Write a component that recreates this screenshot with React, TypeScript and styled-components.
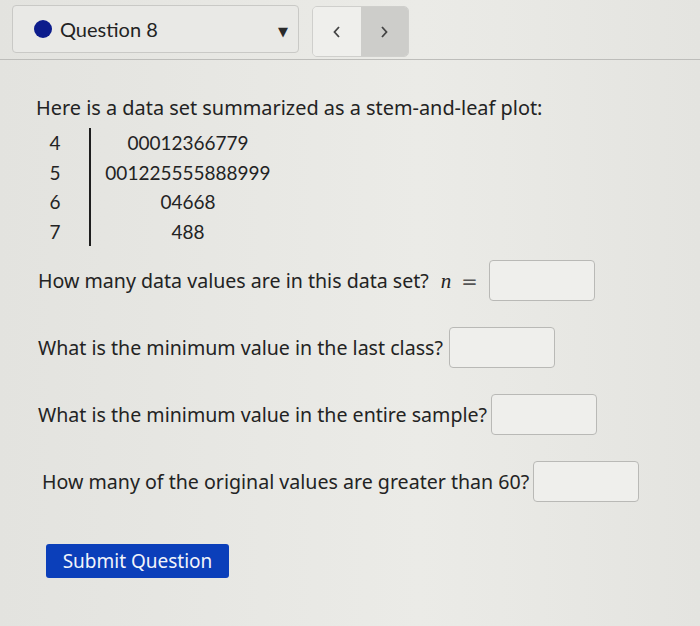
import React from 'react';
import styled, {createGlobalStyle} from 'styled-components';

const Global = createGlobalStyle`
  html, body {
    margin: 0;
    padding: 0;
    background: #e6e6e2;
  }
  body {
    font-family: 'Noto Sans', 'Liberation Sans', sans-serif;
    color: #232323;
  }
`;

const Page = styled.div`
  width: 700px;
  height: 626px;
  overflow: hidden;
  background: linear-gradient(90deg, #e3e3df, #ebebe7 60%, #e4e4e0);
`;

const Header = styled.div`
  display: flex;
  align-items: flex-start;
  gap: 13px;
  height: 54px;
  padding: 5px 0 0 12px;
  border-bottom: 1px solid #bdbdba;
`;

const Select = styled.div`
  box-sizing: border-box;
  width: 287px;
  height: 48px;
  display: flex;
  align-items: center;
  padding: 0 10px 0 21px;
  border: 1px solid #c9c9c6;
  border-radius: 4px;
  background: #e9e9e6;
  font-family: Lato, 'Noto Sans', sans-serif;
  font-size: 20px;
`;

const Dot = styled.span`
  width: 18px;
  height: 18px;
  border-radius: 50%;
  background: #0c1c8c;
  margin-right: 8px;
`;

const SelectLabel = styled.span`
  flex: 1;
`;

const Caret = styled.span`
  font-family: 'DejaVu Sans', sans-serif;
  font-size: 13px;
  color: #2a2a2a;
  margin-top: 5px;
`;

const Nav = styled.div`
  display: flex;
  width: 95px;
  height: 49px;
  margin-top: 1px;
  border: 1px solid #cfcfcc;
  border-radius: 5px;
  overflow: hidden;
`;

const NavButton = styled.div<{$active?: boolean}>`
  flex: 1;
  display: flex;
  align-items: center;
  justify-content: center;
  background: ${(p) => (p.$active ? '#cdcdca' : '#efefec')};
`;

const Content = styled.div`
  padding: 36px 0 0 36px;
`;

const Title = styled.div`
  font-size: 19.9px;
  line-height: 24px;
`;

const Plot = styled.div`
  display: flex;
  margin: 8px 0 0 12px;
  font-family: Lato, 'Noto Sans', sans-serif;
  font-size: 19px;
`;

const StemCol = styled.div`
  width: 14px;
  margin-right: 27px;
  text-align: center;
`;

const LeafCol = styled.div`
  width: 194px;
  border-left: 2px solid #1e1e1e;
  text-align: center;
`;

const Cell = styled.div`
  height: 29.5px;
  line-height: 29.5px;
`;

const Questions = styled.div`
  display: flex;
  flex-direction: column;
  gap: 26px;
  margin-top: 14px;
`;

const Row = styled.div<{$gap?: number; $indent?: number}>`
  display: flex;
  align-items: center;
  gap: ${(p) => p.$gap ?? 8}px;
  padding-left: ${(p) => p.$indent ?? 2}px;
  font-size: 19.6px;
`;

const MathN = styled.span`
  font-family: 'Liberation Serif', 'DejaVu Serif', serif;
  font-style: italic;
  font-size: 21px;
  margin: 0 10px 0 12px;
`;

const Eq = styled.span`
  font-family: 'DejaVu Sans', sans-serif;
  color: #555;
`;

const Answer = styled.div`
  box-sizing: border-box;
  width: 106px;
  height: 41px;
  border: 1px solid #b9b9b6;
  border-radius: 4px;
  background: #efefec;
`;

const Submit = styled.button`
  margin: 42px 0 0 10px;
  width: 183px;
  height: 34px;
  border: none;
  border-radius: 3px;
  background: #0b3fba;
  color: #f2f4fa;
  font-family: 'Noto Sans', sans-serif;
  font-size: 19px;
  padding: 0;
`;

const stems = ['4', '5', '6', '7'];
const leaves = ['00012366779', '001225555888999', '04668', '488'];

const Chevron = ({dir}: {dir: 'left' | 'right'}) => (
  <svg width="10" height="14" viewBox="0 0 10 14">
    <path
      d={dir === 'left' ? 'M7 2 L2.5 7 L7 12' : 'M3 2 L7.5 7 L3 12'}
      fill="none"
      stroke="#444"
      strokeWidth="1.8"
    />
  </svg>
);

export default function App() {
  return (
    <Page>
      <Global />
      <Header>
        <Select>
          <Dot />
          <SelectLabel>Question 8</SelectLabel>
          <Caret>▼</Caret>
        </Select>
        <Nav>
          <NavButton>
            <Chevron dir="left" />
          </NavButton>
          <NavButton $active>
            <Chevron dir="right" />
          </NavButton>
        </Nav>
      </Header>
      <Content>
        <Title>Here is a data set summarized as a stem-and-leaf plot:</Title>
        <Plot>
          <StemCol>
            {stems.map((s) => (
              <Cell key={s}>{s}</Cell>
            ))}
          </StemCol>
          <LeafCol>
            {leaves.map((l) => (
              <Cell key={l}>{l}</Cell>
            ))}
          </LeafCol>
        </Plot>
        <Questions>
          <Row $gap={11}>
            <span>
              How many data values are in this data set?
              <MathN>n</MathN>
              <Eq>=</Eq>
            </span>
            <Answer />
          </Row>
          <Row $gap={6}>
            <span>What is the minimum value in the last class?</span>
            <Answer />
          </Row>
          <Row $gap={4}>
            <span>What is the minimum value in the entire sample?</span>
            <Answer />
          </Row>
          <Row $gap={4} $indent={6}>
            <span>How many of the original values are greater than 60?</span>
            <Answer />
          </Row>
        </Questions>
        <Submit>Submit Question</Submit>
      </Content>
    </Page>
  );
}
